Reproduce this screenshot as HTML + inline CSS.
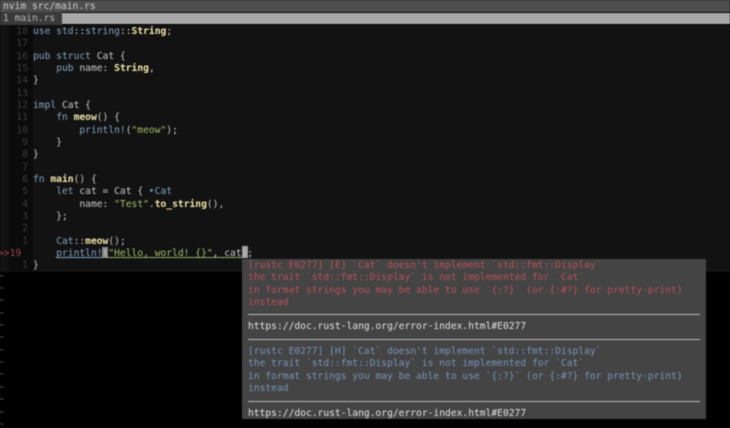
<!DOCTYPE html>
<html><head><meta charset="utf-8">
<style>
html,body{margin:0;padding:0;background:#000;}
#s{position:relative;width:730px;height:428px;overflow:hidden;background:#000;font-family:"DejaVu Sans Mono","Liberation Mono",monospace;font-size:9.65px;line-height:12px;color:#c8c8c8;filter:blur(0.45px);}
#s div{position:absolute;white-space:pre;}
.l{left:33px;color:#c6c8c6;}
.n{left:9px;width:19px;text-align:right;color:#3c3c3c;}
.k{color:#81a2be;}
.t{color:#f0e6a8;font-weight:bold;}
.f{color:#f0e6a8;font-weight:bold;}
.s{color:#a3bd6a;}
.r{color:#b5505a;left:248px;}
.b{color:#7793b8;left:248px;}
.u{color:#e0e0e0;left:248px;}
.h{left:248px;width:452px;height:1px;background:#b8b8b8;}
.w{color:#6a6a6a;left:-2px;}
</style></head><body><div id="s">
<div style="left:0;top:0;width:730px;height:12px;background:#4e4e4e"></div>
<div style="left:3px;top:1px;color:#d0d0d0">nvim src/main.rs</div>
<div style="left:0;top:12px;width:62px;height:13px;background:#3a3a3a"></div>
<div style="left:3px;top:13px;color:#b8b8b8">1 main.rs</div>
<div style="left:62px;top:13px;width:668px;height:11px;background:#a8a8a8"></div>
<div style="left:0;top:25px;width:730px;height:247px;background:#121212"></div>
<div style="left:9px;top:25px;width:24px;height:246px;background:#0b0b0b"></div>

<div style="left:56px;top:257px;width:47px;height:1px;background:#81a2be"></div>
<div style="left:108px;top:257px;width:134px;height:1px;background:#8fa86a"></div>
<div style="left:102px;top:247px;width:6px;height:11px;background:#8a8a8a"></div>
<div style="left:242px;top:246px;width:6px;height:12px;background:#a0a0a0"></div>

<div class="n" style="top:26px">18</div><div class="l" style="top:26px"><span class="k">use std</span>::<span class="k">string</span>::<span class="t">String</span>;</div>
<div class="n" style="top:38px">17</div>
<div class="n" style="top:51px">16</div><div class="l" style="top:51px"><span class="k">pub struct</span> Cat {</div>
<div class="n" style="top:63px">15</div><div class="l" style="top:63px">    <span class="k">pub</span> name: <span class="t">String</span>,</div>
<div class="n" style="top:75px">14</div><div class="l" style="top:75px">}</div>
<div class="n" style="top:88px">13</div>
<div class="n" style="top:100px">12</div><div class="l" style="top:100px"><span class="k">impl</span> Cat {</div>
<div class="n" style="top:112px">11</div><div class="l" style="top:112px">    <span class="k">fn</span> <span class="f">meow</span>() {</div>
<div class="n" style="top:125px">10</div><div class="l" style="top:125px">        <span class="k">println!</span>(<span class="s">"meow"</span>);</div>
<div class="n" style="top:137px">9</div><div class="l" style="top:137px">    }</div>
<div class="n" style="top:149px">8</div><div class="l" style="top:149px">}</div>
<div class="n" style="top:162px">7</div>
<div class="n" style="top:174px">6</div><div class="l" style="top:174px"><span class="k">fn</span> <span class="f">main</span>() {</div>
<div class="n" style="top:186px">5</div><div class="l" style="top:186px">    <span class="k">let</span> cat = Cat { <span class="k">‣Cat</span></div>
<div class="n" style="top:199px">4</div><div class="l" style="top:199px">        name: <span class="s">"Test"</span>.<span class="f">to_string</span>(),</div>
<div class="n" style="top:211px">3</div><div class="l" style="top:211px">    };</div>
<div class="n" style="top:223px">2</div>
<div class="n" style="top:236px">1</div><div class="l" style="top:236px">    <span class="k">Cat</span>::<span class="f">meow</span>();</div>
<div style="left:-2px;top:248px;color:#a8434c">&gt;&gt;19</div>
<div class="l" style="top:248px">    <span class="k">println!</span>(<span class="s">"Hello, world! {}"</span>, cat);</div>
<div class="n" style="top:260px">1</div><div class="l" style="top:260px">}</div>

<div class="w" style="top:271px">~</div>
<div class="w" style="top:283px">~</div>
<div class="w" style="top:295px">~</div>
<div class="w" style="top:308px">~</div>
<div class="w" style="top:320px">~</div>
<div class="w" style="top:332px">~</div>
<div class="w" style="top:345px">~</div>
<div class="w" style="top:357px">~</div>
<div class="w" style="top:369px">~</div>
<div class="w" style="top:382px">~</div>
<div class="w" style="top:394px">~</div>
<div class="w" style="top:407px">~</div>
<div class="w" style="top:419px">~</div>

<div style="left:242px;top:259px;width:464px;height:160px;background:#444444"></div>
<div class="r" style="top:260px">[rustc E0277] [E] `Cat` doesn't implement `std::fmt::Display`</div>
<div class="r" style="top:272px">the trait `std::fmt::Display` is not implemented for `Cat`</div>
<div class="r" style="top:285px">in format strings you may be able to use `{:?}` (or {:#?} for pretty-print)</div>
<div class="r" style="top:297px">instead</div>
<div class="h" style="top:314px"></div>
<div class="u" style="top:321px">https://doc.rust-lang.org/error-index.html#E0277</div>
<div class="h" style="top:339px"></div>
<div class="b" style="top:346px">[rustc E0277] [H] `Cat` doesn't implement `std::fmt::Display`</div>
<div class="b" style="top:358px">the trait `std::fmt::Display` is not implemented for `Cat`</div>
<div class="b" style="top:371px">in format strings you may be able to use `{:?}` (or {:#?} for pretty-print)</div>
<div class="b" style="top:383px">instead</div>
<div class="h" style="top:401px"></div>
<div class="u" style="top:408px">https://doc.rust-lang.org/error-index.html#E0277</div>
</div></body></html>
